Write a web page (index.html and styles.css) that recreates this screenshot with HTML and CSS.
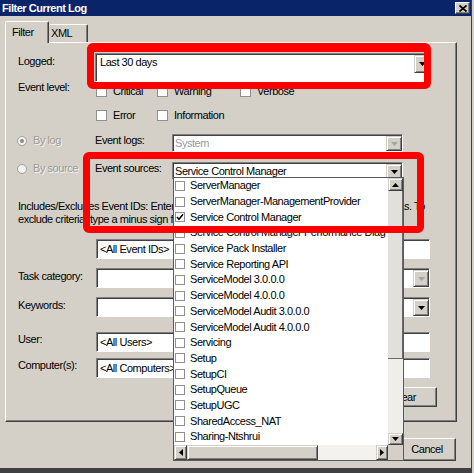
FILE: index.html
```html
<!DOCTYPE html>
<html>
<head>
<meta charset="utf-8">
<title>Filter Current Log</title>
<link rel="stylesheet" href="styles.css">
</head>
<body>
<div class="dialog">
  <div class="titlebar">
    <span class="title">Filter Current Log</span>
    <span class="close"><svg width="8" height="7" viewBox="0 0 8 7"><path d="M0.5 0.5 L7.5 6.5 M7.5 0.5 L0.5 6.5" stroke="#000" stroke-width="1.7" fill="none"/></svg></span>
  </div>
  <div class="tabs">
    <div class="tab tab-active">Filter</div>
    <div class="tab tab-xml">XML</div>
  </div>
  <div class="panel">
    <div class="row row-logged">
      <div class="lbl">Logged:</div>
      <div class="field combo combo-logged">
        <span class="val">Last 30 days</span>
        <span class="arrow"><svg width="7" height="4" viewBox="0 0 7 4"><polygon points="0,0 7,0 3.5,4" fill="#000"/></svg></span>
      </div>
    </div>
    <div class="row row-level">
      <div class="lbl lbl-flat">Event level:</div>
      <div class="checks">
        <label class="chk"><span class="box"></span>Critical</label>
        <label class="chk"><span class="box"></span>Warning</label>
        <label class="chk"><span class="box"></span>Verbose</label>
        <label class="chk"><span class="box"></span>Error</label>
        <label class="chk"><span class="box"></span>Information</label>
      </div>
    </div>
    <div class="row row-log">
      <div class="radio-cell"><span class="radio radio-on"></span><span class="dis-text">By log</span></div>
      <div class="lbl2">Event logs:</div>
      <div class="field combo combo-mid">
        <span class="val dis-val">System</span>
        <span class="arrow"><svg width="7" height="4" viewBox="0 0 7 4"><polygon points="0,0 7,0 3.5,4" fill="#a4a4a4"/></svg></span>
      </div>
    </div>
    <div class="row row-source">
      <div class="radio-cell"><span class="radio"></span><span class="dis-text">By source</span></div>
      <div class="lbl2">Event sources:</div>
      <div class="field combo combo-mid">
        <span class="val">Service Control Manager</span>
        <span class="arrow"><svg width="7" height="4" viewBox="0 0 7 4"><polygon points="0,0 7,0 3.5,4" fill="#000"/></svg></span>
      </div>
    </div>
    <p class="desc">Includes/Excludes Event IDs: Enter ID numbers and/or ID ranges separated by commas. To<br>exclude criteria, type a minus sign first. For example 1,3,5-99,-76</p>
    <div class="row row-ids">
      <div class="lbl"></div>
      <div class="field wide"><span class="val">&lt;All Event IDs&gt;</span></div>
    </div>
    <div class="row row-task">
      <div class="lbl">Task category:</div>
      <div class="field combo wide">
        <span class="val"></span>
        <span class="arrow"><svg width="7" height="4" viewBox="0 0 7 4"><polygon points="0,0 7,0 3.5,4" fill="#a4a4a4"/></svg></span>
      </div>
    </div>
    <div class="row row-keys">
      <div class="lbl">Keywords:</div>
      <div class="field combo wide">
        <span class="val"></span>
        <span class="arrow"><svg width="7" height="4" viewBox="0 0 7 4"><polygon points="0,0 7,0 3.5,4" fill="#000"/></svg></span>
      </div>
    </div>
    <div class="row row-user">
      <div class="lbl">User:</div>
      <div class="field wide"><span class="val">&lt;All Users&gt;</span></div>
    </div>
    <div class="row row-comp">
      <div class="lbl">Computer(s):</div>
      <div class="field wide"><span class="val">&lt;All Computers&gt;</span></div>
    </div>
    <div class="row row-clear">
      <span class="btn btn-clear">Clear</span>
    </div>
  </div>
  <div class="footer">
    <span class="btn btn-ok">OK</span>
    <span class="btn btn-cancel">Cancel</span>
  </div>

  <div class="dropdown">
    <ul class="items">
      <li><span class="box"></span>ServerManager</li>
      <li><span class="box"></span>ServerManager-ManagementProvider</li>
      <li><span class="box"><svg width="8" height="8" viewBox="0 0 8 8"><polyline points="1,4 3,6.3 7,1.3" fill="none" stroke="#000" stroke-width="1.5"/></svg></span>Service Control Manager</li>
      <li><span class="box"></span>Service Control Manager Performance Diag</li>
      <li><span class="box"></span>Service Pack Installer</li>
      <li><span class="box"></span>Service Reporting API</li>
      <li><span class="box"></span>ServiceModel 3.0.0.0</li>
      <li><span class="box"></span>ServiceModel 4.0.0.0</li>
      <li><span class="box"></span>ServiceModel Audit 3.0.0.0</li>
      <li><span class="box"></span>ServiceModel Audit 4.0.0.0</li>
      <li><span class="box"></span>Servicing</li>
      <li><span class="box"></span>Setup</li>
      <li><span class="box"></span>SetupCI</li>
      <li><span class="box"></span>SetupQueue</li>
      <li><span class="box"></span>SetupUGC</li>
      <li><span class="box"></span>SharedAccess_NAT</li>
      <li><span class="box"></span>Sharing-Ntshrui</li>
    </ul>
    <div class="vscroll">
      <span class="sbtn sbtn-v"><svg width="7" height="4" viewBox="0 0 7 4"><polygon points="0,4 7,4 3.5,0" fill="#000"/></svg></span>
      <span class="vthumb"></span>
      <span class="vtrack"></span>
      <span class="sbtn sbtn-v sbtn-down"><svg width="7" height="4" viewBox="0 0 7 4"><polygon points="0,0 7,0 3.5,4" fill="#000"/></svg></span>
    </div>
    <div class="hscroll">
      <span class="sbtn sbtn-h"><svg width="4" height="7" viewBox="0 0 4 7"><polygon points="4,0 4,7 0,3.5" fill="#000"/></svg></span>
      <span class="hthumb"></span>
      <span class="htrack"></span>
      <span class="sbtn sbtn-h sbtn-right"><svg width="4" height="7" viewBox="0 0 4 7"><polygon points="0,0 0,7 4,3.5" fill="#000"/></svg></span>
    </div>
    <div class="corner"></div>
  </div>

  <div class="hl hl1"></div>
  <div class="hl hl2"></div>
</div>
</body>
</html>
```
FILE: styles.css
```css
* { box-sizing: border-box; }
html, body { margin: 0; padding: 0; }
body {
  background: #d4d0c8;
  font-family: "Liberation Sans", Arial, sans-serif;
  font-size: 11px;
  letter-spacing: -0.45px;
  color: #000;
  line-height: 13px;
}
.dialog {
  position: relative;
  width: 472px;
  height: 473px;
  background: #d4d0c8;
  border-right: 1px solid #404040;
  border-bottom: 5px solid #404040;
  overflow: hidden;
}
.titlebar {
  height: 16px;
  background: #0a246a;
  display: flex;
  align-items: center;
  justify-content: space-between;
  padding: 0 1px 0 2px;
}
.title {
  color: #fff;
  font-weight: bold;
  line-height: 16px;
}
.close {
  width: 15px;
  height: 12px;
  background: #d4d0c8;
  border: 1px solid;
  border-color: #fff #404040 #404040 #fff;
  box-shadow: inset -1px -1px #808080;
  display: flex;
  align-items: center;
  justify-content: center;
}
.tabs {
  display: flex;
  align-items: flex-end;
  margin-top: 5px;
  padding-left: 5px;
  height: 22px;
  position: relative;
  z-index: 1;
}
.tab {
  background: #d4d0c8;
  border: 1px solid;
  border-bottom: none;
  border-color: #fff #404040 transparent #fff;
  box-shadow: inset -1px 0 #808080;
  border-radius: 2px 2px 0 0;
}
.tab-active {
  width: 44px;
  height: 22px;
  padding: 4px 0 0 6px;
}
.tab-xml {
  width: 39px;
  height: 18px;
  margin-bottom: 1px;
  padding: 2px 0 0 2px;
  border-left: none;
}
.panel {
  margin: -1px 0 0 5px;
  width: 452px;
  height: 380px;
  border: 1px solid;
  border-color: #fff #404040 #404040 #fff;
  box-shadow: inset -1px -1px #808080;
  padding: 10px 0 0 12px;
  display: flex;
  flex-direction: column;
}
.row {
  display: flex;
  align-items: flex-start;
  flex: none;
}
.lbl {
  width: 78px;
  flex: none;
  padding-top: 2px;
}
.lbl-flat { padding-top: 0; }
.lbl2 {
  width: 77px;
  flex: none;
}
.field {
  height: 20px;
  background: #fff;
  border: 1px solid;
  border-color: #808080 #fff #fff #808080;
  box-shadow: inset 1px 1px 0 #404040;
  padding-left: 3px;
  display: flex;
  align-items: center;
  flex: none;
}
.val { white-space: nowrap; }
.combo { padding-right: 0; }
.arrow {
  margin-left: auto;
  align-self: stretch;
  margin-top: 1px;
  width: 16px;
  background: #d4d0c8;
  border: 1px solid;
  border-color: #d4d0c8 #404040 #404040 #d4d0c8;
  box-shadow: inset 1px 1px #fff, inset -1px -1px #808080;
  display: flex;
  align-items: center;
  justify-content: center;
}
.row-logged .lbl { padding-top: 2px; }
.combo-logged {
  margin-left: -1px;
  width: 336px;
  height: 29px;
  align-items: flex-start;
}
.combo-logged .val { padding-top: 2px; padding-left: 1px; }
.combo-logged .arrow { align-self: flex-start; height: 18px; }
.row-level { margin-top: -1px; }
.checks {
  display: grid;
  grid-template-columns: 61px 83px auto;
  row-gap: 10px;
  margin-top: 3px;
}
.chk {
  display: flex;
  align-items: center;
  height: 14px;
}
.box {
  width: 11px;
  height: 11px;
  flex: none;
  background: #fff;
  border: 1px solid #8f8f8f;
  margin-right: 6px;
  display: flex;
  align-items: center;
  justify-content: center;
}
.row-log { margin-top: 12px; }
.row-source { margin-top: 10px; }
.radio-cell {
  width: 78px;
  flex: none;
  display: flex;
  align-items: flex-start;
  margin-left: -1px;
}
.radio {
  width: 10px;
  height: 10px;
  border-radius: 50%;
  border: 1px solid #a0a0a0;
  background: #f4f3f0;
  margin: 2px 6px 0 0;
  display: flex;
  align-items: center;
  justify-content: center;
  flex: none;
}
.radio-on::after {
  content: "";
  width: 4px;
  height: 4px;
  border-radius: 50%;
  background: #8a8a8a;
}
.dis-text {
  color: #9a9a9a;
  text-shadow: 1px 1px 0 #f4f4f4;
}
.dis-val { color: #9a9a9a; }
.combo-mid {
  width: 231px;
  height: 18px;
  padding-left: 2px;
}
.desc {
  margin: 20px 0 0 0;
  white-space: nowrap;
  line-height: 13px;
}
.row-ids { margin-top: 13px; }
.wide { width: 334px; }
.row-task { margin-top: 9px; }
.row-keys { margin-top: 9px; }
.row-user { margin-top: 15px; }
.row-comp { margin-top: 6px; }
.row-user .lbl, .row-comp .lbl { padding-top: 1px; }
.row-clear {
  margin-top: 9px;
  justify-content: flex-end;
  padding-right: 19px;
}
.btn {
  background: #d4d0c8;
  border: 1px solid;
  border-color: #fff #404040 #404040 #fff;
  box-shadow: inset -1px -1px #808080;
  display: flex;
  align-items: center;
  justify-content: center;
}
.btn-clear { width: 66px; height: 20px; }
.footer {
  display: flex;
  justify-content: flex-end;
  gap: 6px;
  margin-top: 16px;
  padding-right: 15px;
}
.btn-ok, .btn-cancel { width: 58px; height: 23px; }

/* open drop-down list */
.dropdown {
  position: absolute;
  left: 173px;
  top: 177px;
  width: 231px;
  height: 284px;
  background: #fff;
  border: 1px solid #5a5a5a;
  display: grid;
  grid-template-columns: 214px 15px;
  grid-template-rows: 267px 15px;
  z-index: 2;
}
.items {
  list-style: none;
  margin: 0;
  padding: 0;
  overflow: hidden;
}
.items li {
  height: 15.7px;
  display: flex;
  align-items: center;
  padding-left: 1px;
  white-space: nowrap;
}
.items .box {
  width: 10px;
  height: 10px;
  margin-right: 5px;
}
.vscroll {
  display: flex;
  flex-direction: column;
  background: #efeeeb;
}
.sbtn {
  flex: none;
  background: #d4d0c8;
  border: 1px solid;
  border-color: #d4d0c8 #404040 #404040 #d4d0c8;
  box-shadow: inset 1px 1px #fff, inset -1px -1px #808080;
  display: flex;
  align-items: center;
  justify-content: center;
}
.sbtn-v { height: 13px; }
.sbtn-down { height: 12px; }
.vthumb {
  height: 168px;
  flex: none;
  background: #e2e0dc;
  border-right: 1px solid #6a6a6a;
  border-bottom: 1px solid #6a6a6a;
}
.vtrack { flex: 1; }
.hscroll {
  display: flex;
  background: #f3f2ef;
}
.sbtn-h { width: 13px; }
.sbtn-right { width: 12px; }
.hthumb {
  width: 131px;
  flex: none;
  background: #d4d0c8;
  border: 1px solid;
  border-color: #d4d0c8 #404040 #404040 #d4d0c8;
  box-shadow: inset 1px 1px #fff, inset -1px -1px #808080;
}
.htrack { flex: 1; }
.corner { background: #d4d0c8; }

/* red highlight boxes drawn over the screenshot */
.hl {
  position: absolute;
  border: 7px solid #ff0000;
  border-radius: 6px;
  z-index: 3;
}
.hl1 {
  left: 87px;
  top: 43px;
  width: 344px;
  height: 46px;
  border-top-width: 9px;
}
.hl2 {
  left: 83px;
  top: 152px;
  width: 341px;
  height: 81px;
}
```
